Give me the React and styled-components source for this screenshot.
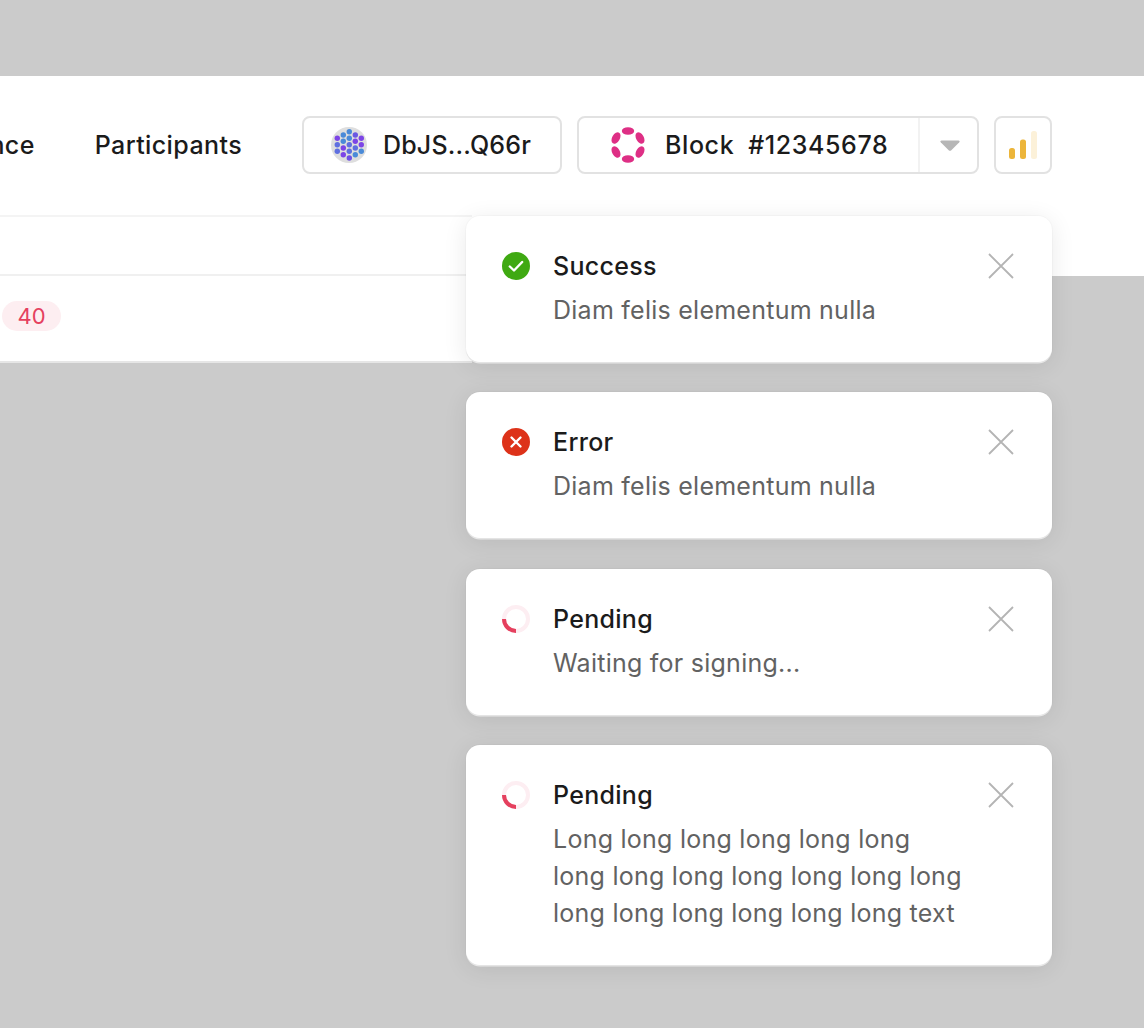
import React from "react";
import styled, { createGlobalStyle } from "styled-components";

const Global = createGlobalStyle`
  html, body { margin: 0; padding: 0; background: #cbcbcb; }
  body { font-family: "Inter", "Liberation Sans", sans-serif; }
  * { box-sizing: border-box; }
`;

const Page = styled.div`
  position: relative;
  width: 1144px;
  height: 1028px;
  overflow: hidden;
  padding-top: 76px;
`;
const Panel = styled.div`
  background: #fff;
  height: 200px;
`;
const Header = styled.header`
  height: 139px;
  padding: 40px 92px 0 0;
  display: flex;
  justify-content: flex-end;
  align-items: flex-start;
  overflow: hidden;
`;
const Nav = styled.nav`
  display: flex;
  gap: 60px;
  margin-right: 60px;
  height: 58px;
  align-items: center;
  flex: none;
`;
const NavLink = styled.a`
  font-size: 25px;
  font-weight: 500;
  letter-spacing: 0.4px;
  color: #1b1b1b;
  white-space: nowrap;
`;
const Controls = styled.div`
  display: flex;
  gap: 15px;
  flex: none;
`;
const Control = styled.div`
  height: 58px;
  width: ${(p) => p.$w}px;
  border: 2px solid #e2e2e2;
  border-radius: 8px;
  display: flex;
  align-items: center;
  font-size: 25px;
  font-weight: 500;
  letter-spacing: 0.6px;
  color: #1b1b1b;
  white-space: nowrap;
`;
const WalletControl = styled(Control)`
  padding-left: 27px;
  gap: 16px;
  letter-spacing: 0.18px;
`;
const BlockMain = styled.div`
  flex: 1;
  height: 100%;
  display: flex;
  align-items: center;
  padding-left: 31px;
  gap: 19px;
  border-right: 2px solid #f2f2f2;
`;
const BlockLabel = styled.span`
  display: flex;
  gap: 14px;
`;
const CaretBox = styled.div`
  width: 57px;
  padding-left: 2px;
  display: flex;
  justify-content: center;
`;
const StatsControl = styled(Control)`
  justify-content: center;
`;
const TableHead = styled.div`
  width: 472px;
  height: 61px;
  border-top: 2px solid #f4f4f4;
  border-bottom: 2px solid #f0f0f0;
`;
const TableRow = styled.div`
  width: 472px;
  height: 87px;
  background: #fff;
  border-bottom: 2px solid #e6e6e6;
  display: flex;
  align-items: center;
  padding: 0 0 6px 2px;
`;
const Badge = styled.span`
  width: 59px;
  height: 30px;
  border-radius: 15px;
  background: #fdeef1;
  color: #e5405e;
  font-size: 22px;
  display: flex;
  align-items: center;
  justify-content: center;
`;
const ToastStack = styled.div`
  position: absolute;
  left: 466px;
  top: 216px;
  width: 586px;
  display: flex;
  flex-direction: column;
  gap: 30.33px;
`;
const Toast = styled.div`
  background: #fff;
  border-radius: 14px;
  padding: 32px 37px 33px 36px;
  display: grid;
  grid-template-columns: 28px 1fr 28px;
  column-gap: 24px;
  box-shadow: 0 0 0 1px rgba(0,0,0,.02), 0 1.5px 0 #e9e9e9, 0 4px 24px rgba(0,0,0,.09);
`;
const IconCell = styled.div`
  width: 28px;
  height: 36px;
  display: flex;
  align-items: center;
`;
const Texts = styled.div`
  min-width: 0;
  margin-left: -1px;
`;
const Title = styled.div`
  font-size: 25px;
  line-height: 36px;
  font-weight: 500;
  letter-spacing: 0.3px;
  color: #1b1b1b;
`;
const Body = styled.div`
  margin-top: 8px;
  font-size: 25px;
  line-height: 37px;
  letter-spacing: 0.25px;
  color: #626262;
`;
const Close = styled.button`
  width: 28px;
  height: 28px;
  margin: 4px 0 0 0;
  padding: 0;
  background: none;
  border: 0;
  display: flex;
`;

const avatarDots = (() => {
  const cols = [
    [337.3, [138.3, 144.7, 151.3], ["#7c45e6", "#5f6fe0", "#5f6fe0"]],
    [343.3, [135, 141.3, 148, 154.7], ["#4a8ad8", "#4a8ad8", "#7c45e6", "#7c45e6"]],
    [349.3, [131.7, 138.3, 144.7, 151.3, 158], ["#4a8ad8", "#4a8ad8", "#5f6fe0", "#5f6fe0", "#7050e4"]],
    [355.3, [135, 141.3, 148, 154.7], ["#6a58e2", "#7c45e6", "#5f6fe0", "#4a8ad8"]],
    [361.3, [138.3, 144.7, 151.3], ["#7c45e6", "#7c45e6", "#4a8ad8"]],
  ];
  const out = [];
  cols.forEach(([x, ys, cs]) => ys.forEach((y, i) => out.push([x - 331, y - 127, cs[i]])));
  return out;
})();

const Avatar = () => (
  <svg width="36" height="36" viewBox="0 0 36 36" style={{ flex: "none" }}>
    <circle cx="18" cy="18" r="18" fill="#dedede" />
    {avatarDots.map(([x, y, c], i) => (
      <circle key={i} cx={x} cy={y} r="2.7" fill={c} />
    ))}
  </svg>
);

const Polkadot = () => (
  <svg width="36" height="36" viewBox="0 0 36 36" style={{ flex: "none" }}>
    <g fill="#de2f85">
      <ellipse cx="18" cy="4" rx="6.2" ry="3.8" />
      <ellipse cx="18" cy="32" rx="6.2" ry="3.8" />
      <ellipse cx="6" cy="11" rx="6.2" ry="3.8" transform="rotate(-60 6 11)" />
      <ellipse cx="30" cy="11" rx="6.2" ry="3.8" transform="rotate(60 30 11)" />
      <ellipse cx="6" cy="25" rx="6.2" ry="3.8" transform="rotate(60 6 25)" />
      <ellipse cx="30" cy="25" rx="6.2" ry="3.8" transform="rotate(-60 30 25)" />
    </g>
  </svg>
);

const Caret = () => (
  <svg width="20" height="11" viewBox="0 0 20 11">
    <path d="M1.5 0.5h17c1 0 1.5 1 .8 1.8l-8 8c-.7.7-1.9.7-2.6 0l-8-8C0 1.500.5.5 1.500.5z" fill="#b6b6b6" />
  </svg>
);

const Bars = () => (
  <svg width="28" height="28" viewBox="0 0 28 28">
    <rect x="0" y="17" width="6" height="11" rx="2.500" fill="#ecb53a" />
    <rect x="11" y="8.500" width="6" height="19.500" rx="2.500" fill="#ecb53a" />
    <rect x="22" y="0" width="6" height="28" rx="2.500" fill="#fcf1d9" />
  </svg>
);

const SuccessIcon = () => (
  <svg width="28" height="28" viewBox="0 0 28 28">
    <circle cx="14" cy="14" r="14" fill="#3fa912" />
    <path d="M7.800 14.500l4.200 4 8.200-8.500" fill="none" stroke="#fff" strokeWidth="2.400" strokeLinecap="round" strokeLinejoin="round" />
  </svg>
);
const ErrorIcon = () => (
  <svg width="28" height="28" viewBox="0 0 28 28">
    <circle cx="14" cy="14" r="14" fill="#dd3219" />
    <path d="M9.500 9.500l9 9M18.500 9.500l-9 9" fill="none" stroke="#fff" strokeWidth="2.400" strokeLinecap="round" />
  </svg>
);
const PendingIcon = () => (
  <svg width="28" height="28" viewBox="0 0 28 28">
    <circle cx="14" cy="14" r="12" fill="none" stroke="#fdeef2" strokeWidth="4" />
    <path d="M2 14A12 12 0 0 0 14 26" fill="none" stroke="#e5405e" strokeWidth="4" />
  </svg>
);
const CloseIcon = () => (
  <svg width="28" height="28" viewBox="0 0 28 28">
    <path d="M2 2l24 24M26 2L2 26" fill="none" stroke="#b4b4b4" strokeWidth="1.800" />
  </svg>
);

const toasts = [
  { icon: <SuccessIcon />, title: "Success", body: ["Diam felis elementum nulla"] },
  { icon: <ErrorIcon />, title: "Error", body: ["Diam felis elementum nulla"] },
  { icon: <PendingIcon />, title: "Pending", body: ["Waiting for signing..."] },
  {
    icon: <PendingIcon />,
    title: "Pending",
    body: ["Long long long long long long", "long long long long long long long", "long long long long long long text"],
  },
];

export default function App() {
  return (
    <Page>
      <Global />
      <Panel>
        <Header>
          <Nav>
            <NavLink>Performance</NavLink>
            <NavLink>Participants</NavLink>
          </Nav>
          <Controls>
            <WalletControl $w={260}>
              <Avatar />
              <span>DbJS...Q66r</span>
            </WalletControl>
            <Control $w={402}>
              <BlockMain>
                <Polkadot />
                <BlockLabel>
                  <span>Block</span>
                  <span>#12345678</span>
                </BlockLabel>
              </BlockMain>
              <CaretBox>
                <Caret />
              </CaretBox>
            </Control>
            <StatsControl $w={58}>
              <Bars />
            </StatsControl>
          </Controls>
        </Header>
        <TableHead />
      </Panel>
      <TableRow>
        <Badge>40</Badge>
      </TableRow>
      <ToastStack>
        {toasts.map((t, i) => (
          <Toast key={i}>
            <IconCell>{t.icon}</IconCell>
            <Texts>
              <Title>{t.title}</Title>
              <Body>
                {t.body.map((line) => (
                  <div key={line}>{line}</div>
                ))}
              </Body>
            </Texts>
            <Close>
              <CloseIcon />
            </Close>
          </Toast>
        ))}
      </ToastStack>
    </Page>
  );
}
